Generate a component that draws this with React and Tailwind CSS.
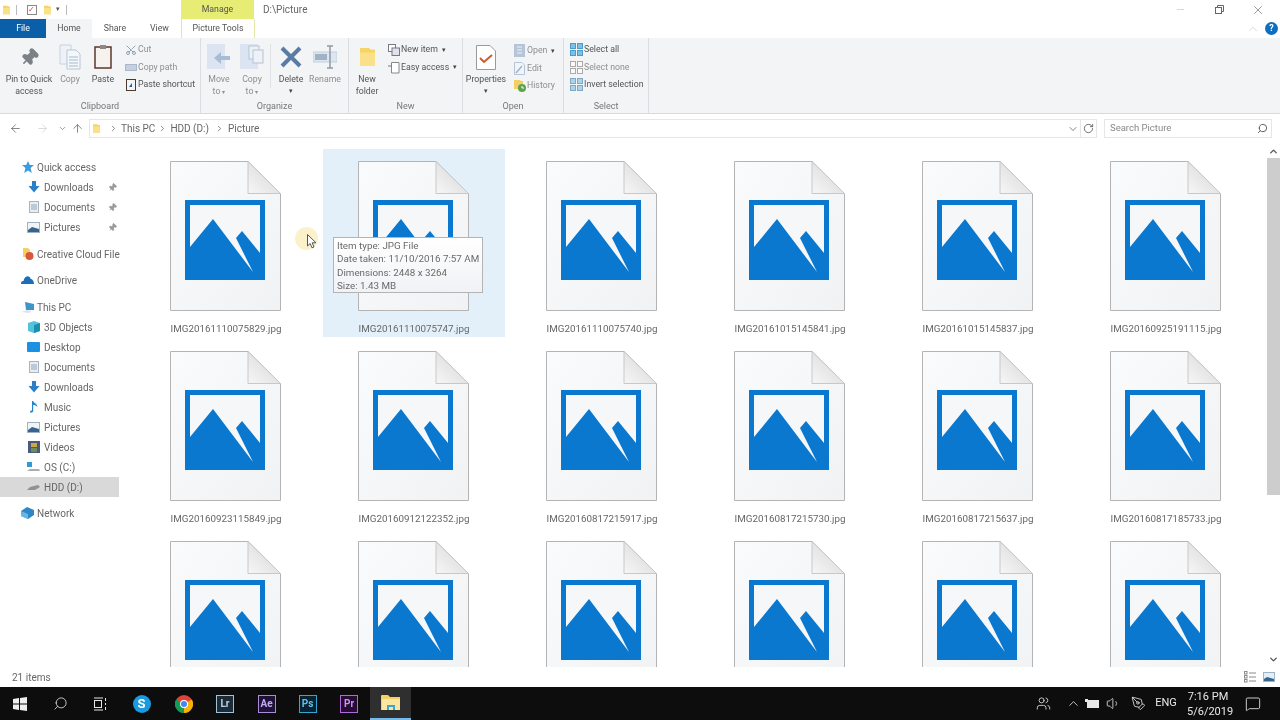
import React from 'react';
import { ArrowLeft, ArrowRight, ArrowUp, ChevronDown, ChevronUp, RotateCw, Search, Minus, X, Scissors, Pin, Volume1, Users, ChevronRight, MessageSquare, PenTool } from 'lucide-react';

const names = [
  'IMG20161110075829.jpg', 'IMG20161110075747.jpg', 'IMG20161110075740.jpg',
  'IMG20161015145841.jpg', 'IMG20161015145837.jpg', 'IMG20160925191115.jpg',
  'IMG20160923115849.jpg', 'IMG20160912122352.jpg', 'IMG20160817215917.jpg',
  'IMG20160817215730.jpg', 'IMG20160817215637.jpg', 'IMG20160817185733.jpg',
  '', '', '', '', '', '',
];

// Small yellow folder used all over the explorer chrome
function FolderIcon({ w = 10, h = 14 }) {
  return (
    <svg width={w} height={h} viewBox="0 0 10 14">
      <path d="M0 1h6l1 1h3v11H0z" fill="#f6d365" />
      <path d="M0 4h10v9H0z" fill="#fbe08a" />
    </svg>
  );
}

function DocIcon() {
  return (
    <svg width="111" height="150" viewBox="0 0 111 150" className="self-start ml-[35px] shrink-0">
      <defs>
        <linearGradient id="docfill" x1="0" y1="0" x2="1" y2="1">
          <stop offset="0" stopColor="#fafbfc" />
          <stop offset="1" stopColor="#f1f2f4" />
        </linearGradient>
        <linearGradient id="foldfill" x1="0" y1="1" x2="1" y2="0">
          <stop offset="0" stopColor="#f6f6f6" />
          <stop offset="1" stopColor="#d4d4d4" />
        </linearGradient>
      </defs>
      <path d="M0.5 0.5H78L110.500 32.500V149.500H0.500Z" fill="url(#docfill)" stroke="#b4b4b4" />
      <path d="M78 0.500V32.500H110.500Z" fill="url(#foldfill)" stroke="#c8c8c8" />
      <rect x="15" y="39" width="80" height="80" fill="#0a78cf" />
      <path d="M20 44H90V92L72 70L66 77L83 111L43 58L20 86Z" fill="#f5f7f9" />
    </svg>
  );
}

function FileCell({ name, selected }) {
  return (
    <div className={`h-[188px] flex flex-col items-center pt-3 ${selected ? 'bg-[#e3f0fa]' : ''}`}>
      <DocIcon />
      <div className="mt-[12px] text-[9.8px] leading-3 text-[#666]">{name}</div>
    </div>
  );
}

function BigBtn({ w, label, sub, arrow, disabled, children }) {
  return (
    <div className="flex flex-col items-center shrink-0" style={{ width: w }}>
      <div className="h-[28px] mt-[5px] flex items-center justify-center shrink-0">{children}</div>
      <div className={`mt-[2px] text-[8.75px] leading-3 text-center whitespace-nowrap ${disabled ? 'text-[#8f8f8f]' : 'text-[#555]'}`}>{label}</div>
      {sub && <div className={`text-[8.75px] leading-3 text-center whitespace-nowrap ${disabled ? 'text-[#8f8f8f]' : 'text-[#555]'}`}>{sub}{arrow && <span className="text-[6px] ml-[2px]">▾</span>}</div>}
      {!sub && arrow && <div className="text-[7px] leading-3 text-[#444]">▾</div>}
    </div>
  );
}

function SmallBtn({ icon, label, disabled, arrow }) {
  return (
    <div className="h-[17.5px] flex items-center">
      <div className="w-[15px] h-[15px] flex items-center justify-center shrink-0">{icon}</div>
      <span className={`text-[8.75px] whitespace-nowrap ${disabled ? 'text-[#8f8f8f]' : 'text-[#555]'}`}>{label}</span>
      {arrow && <span className="ml-1 text-[7px] text-[#444]">▾</span>}
    </div>
  );
}

function RibbonGroup({ w, label, children }) {
  return (
    <div className="flex flex-col h-full border-r border-[#dcdde0] shrink-0" style={{ width: w }}>
      <div className="flex flex-1 min-h-0">{children}</div>
      <div className="h-[13px] text-[9px] leading-3 text-center text-[#777]">{label}</div>
    </div>
  );
}

function Grid4({ fill, stroke }) {
  return (
    <svg width="13" height="13" viewBox="0 0 13 13">
      <rect x="0.5" y="0.5" width="5" height="5" fill={fill} stroke={stroke} />
      <rect x="7.5" y="0.5" width="5" height="5" fill={fill} stroke={stroke} />
      <rect x="0.5" y="7.5" width="5" height="5" fill={fill} stroke={stroke} />
      <rect x="7.5" y="7.5" width="5" height="5" fill={fill} stroke={stroke} />
    </svg>
  );
}

function Ribbon() {
  return (
    <div className="h-[76px] flex bg-[#f3f4f6] border-b border-[#d9dadc] shrink-0">
      <RibbonGroup w={201} label="Clipboard">
        <div className="w-[6px] shrink-0" />
        <BigBtn w={46} label="Pin to Quick" sub="access">
          <Pin size={19} className="text-[#7c8187] fill-[#7c8187] rotate-45" />
        </BigBtn>
        <BigBtn w={36} label="Copy" disabled>
          <svg width="22" height="26" viewBox="0 0 22 26"><path d="M1 1h11v19H1z" fill="#eef2f7" stroke="#c6d2e0" /><path d="M8 6h9l4 4v15H8z" fill="#f5f8fb" stroke="#b6c6d8" /><path d="M10 13h9M10 16h9M10 19h9M10 22h9" stroke="#a5b9d0" /></svg>
        </BigBtn>
        <BigBtn w={30} label="Paste">
          <svg width="18" height="24" viewBox="0 0 18 24"><rect x="1" y="2" width="16" height="21" fill="#f6f3ee" stroke="#5a3a28" strokeWidth="1.5" /><rect x="6" y="0" width="6" height="4" fill="#8a8a8a" /></svg>
        </BigBtn>
        <div className="ml-[5px] pt-[3px] shrink-0">
          <SmallBtn disabled label="Cut" icon={<Scissors size={12} className="text-[#8fa2b8] -rotate-90" />} />
          <SmallBtn disabled label="Copy path" icon={<div className="w-[12px] h-[7px] bg-[#c4d0e0] border border-[#aab8ca]" />} />
          <SmallBtn label="Paste shortcut" icon={<svg width="10" height="13" viewBox="0 0 10 13"><rect x="0.5" y="1.5" width="9" height="11" fill="#f4f4f4" stroke="#4a3a30" /><path d="M3 9l3-4v4z" fill="#1c5fa8" /></svg>} />
        </div>
      </RibbonGroup>
      <RibbonGroup w={148} label="Organize">
        <BigBtn w={36} label="Move" sub="to" arrow disabled>
          <svg width="24" height="26" viewBox="0 0 24 26"><rect x="0" y="0" width="18" height="25" fill="#dbe4f0" /><path d="M23 12h-9V8l-7 6 7 6v-4h9z" fill="#a8bcd3" /></svg>
        </BigBtn>
        <BigBtn w={30} label="Copy" sub="to" arrow disabled>
          <svg width="24" height="26" viewBox="0 0 24 26"><rect x="0" y="0" width="18" height="25" fill="#dbe4f0" /><rect x="9" y="2" width="10" height="13" fill="#eef2f7" stroke="#b4c3d5" /><rect x="13" y="6" width="10" height="13" fill="#eef2f7" stroke="#b4c3d5" /></svg>
        </BigBtn>
        <div className="w-[7px] flex justify-center py-[6px] shrink-0"><div className="w-px h-[44px] bg-[#e2e3e6]" /></div>
        <BigBtn w={34} label="Delete" arrow>
          <svg width="22" height="22" viewBox="0 0 22 22"><path d="M2 2L20 20M20 2L2 20" stroke="#5a7ba3" strokeWidth="4" /></svg>
        </BigBtn>
        <BigBtn w={34} label="Rename" disabled>
          <svg width="24" height="24" viewBox="0 0 24 24"><rect x="0" y="7" width="24" height="10" fill="#dde5ef" stroke="#c3cfdd" /><rect x="2" y="9" width="12" height="6" fill="#9fb2c8" /><path d="M17 1v22M14 1h6M14 23h6" stroke="#8c9aab" strokeWidth="1.5" fill="none" /></svg>
        </BigBtn>
      </RibbonGroup>
      <RibbonGroup w={114} label="New">
        <BigBtn w={36} label="New" sub="folder">
          <FolderIcon w={15} h={24} />
        </BigBtn>
        <div className="ml-[1px] pt-[3px] shrink-0">
          <SmallBtn label="New item" arrow icon={<svg width="12" height="12" viewBox="0 0 12 12"><rect x="0.5" y="0.5" width="7" height="7" fill="#fff" stroke="#778" /><rect x="4" y="4" width="7.5" height="7.5" fill="#dfe3e8" stroke="#778" /></svg>} />
          <SmallBtn label="Easy access" arrow icon={<svg width="12" height="13" viewBox="0 0 12 13"><path d="M3.5 1.5H11v10.5H3.5z" fill="#fff" stroke="#888" /><path d="M0 5h4" stroke="#777" /></svg>} />
        </div>
      </RibbonGroup>
      <RibbonGroup w={101} label="Open">
        <BigBtn w={46} label="Properties" arrow>
          <svg width="20" height="25" viewBox="0 0 20 25"><path d="M0.5 0.5H14L19.5 6V24.5H0.5Z" fill="#fff" stroke="#9a9a9a" /><path d="M4 13l4 4 8-7" fill="none" stroke="#d15a2b" strokeWidth="2" /></svg>
        </BigBtn>
        <div className="ml-[3px] pt-[4px] shrink-0">
          <SmallBtn disabled label="Open" arrow icon={<svg width="11" height="13" viewBox="0 0 11 13"><rect width="11" height="13" fill="#b5c4d6" /><path d="M3 3h5M3 6h5M3 9h5" stroke="#eef2f6" /></svg>} />
          <SmallBtn disabled label="Edit" icon={<svg width="11" height="13" viewBox="0 0 11 13"><path d="M0.5 0.5H8L10.5 3V12.5H0.5Z" fill="#f1f5f9" stroke="#b5c4d6" /><path d="M2 11L8 4" stroke="#9db4cc" strokeWidth="1.5" /></svg>} />
          <SmallBtn disabled label="History" icon={<svg width="12" height="13" viewBox="0 0 12 13"><path d="M0 1h6l1 1h2v8H0z" fill="#f3cf66" /><circle cx="8" cy="9" r="4" fill="#5aa44d" /><path d="M8 7v2h2" stroke="#fff" fill="none" /></svg>} />
        </div>
      </RibbonGroup>
      <RibbonGroup w={85} label="Select">
        <div className="ml-[5px] pt-[3px] shrink-0">
          <SmallBtn label="Select all" icon={<Grid4 fill="#7cc0e6" stroke="#4b9cc9" />} />
          <SmallBtn disabled label="Select none" icon={<Grid4 fill="#fafafa" stroke="#aaa" />} />
          <SmallBtn label="Invert selection" icon={<Grid4 fill="#a9d4ec" stroke="#7fa9c2" />} />
        </div>
      </RibbonGroup>
    </div>
  );
}

function NavRow({ indent, icon, label, pinned, active }) {
  return (
    <div className={`h-5 flex items-center w-[119px] ${active ? 'bg-[#d9d9d9]' : ''}`}>
      <div className={`${indent ? 'ml-[26px]' : 'ml-[20px]'} w-[15px] flex justify-center shrink-0`}>{icon}</div>
      <span className={`${indent ? 'ml-[3px]' : 'ml-[2px]'} text-[10px] whitespace-nowrap text-[#666]`}>{label}</span>
      {pinned && <Pin size={9} className="ml-auto mr-[2px] text-[#999] fill-[#999] rotate-45" />}
    </div>
  );
}

const DownIco = () => <svg width="12" height="12" viewBox="0 0 12 12"><path d="M4 0h4v5h3.5L6 11.5.5 5H4z" fill="#2a7fc9" /></svg>;
const DocsIco = () => <svg width="10" height="12" viewBox="0 0 10 12"><rect x="0.5" y="0.5" width="9" height="11" fill="#e9eef2" stroke="#a9b4bd" /><path d="M2 4h6M2 6h6M2 8h6" stroke="#8da7bb" /></svg>;
const PicsIco = () => <svg width="13" height="11" viewBox="0 0 13 11"><rect x="0.5" y="0.5" width="12" height="10" fill="#f0f4f7" stroke="#9fb3c3" /><path d="M1 8l4-3 7 2v3H1z" fill="#36648f" /></svg>;

function Sidebar() {
  return (
    <div className="w-[132px] shrink-0 pt-[14px]">
      <NavRow label="Quick access" icon={<svg width="12" height="12" viewBox="0 0 12 12"><path d="M6 0l1.8 4H12L8.6 7l1.2 5L6 9.4 2.2 12l1.2-5L0 4h4.2z" fill="#3b9ddd" /></svg>} />
      <NavRow indent pinned label="Downloads" icon={<DownIco />} />
      <NavRow indent pinned label="Documents" icon={<DocsIco />} />
      <NavRow indent pinned label="Pictures" icon={<PicsIco />} />
      <div className="mt-[7px]">
        <NavRow label="Creative Cloud File" icon={<svg width="12" height="12" viewBox="0 0 12 12"><path d="M1 0h5l2 2v7H1z" fill="#f3cf66" /><circle cx="7.5" cy="8" r="4" fill="#d9583b" /></svg>} />
      </div>
      <div className="mt-[6px]">
        <NavRow label="OneDrive" icon={<svg width="13" height="8" viewBox="0 0 13 8"><path d="M0 8c-.3-2 1-3 2.500-3C3 2 5-.5 7.500.5 9 1 9.500 2 9.700 3 11.500 3 13 5 13 8z" fill="#1a6fb8" /></svg>} />
      </div>
      <div className="mt-[7px]">
        <NavRow label="This PC" icon={<svg width="14" height="12" viewBox="0 0 14 12"><path d="M4 1l9 2v6H5z" fill="#3d96c9" /><path d="M0 11l6-2 5 1-3 2z" fill="#dfe3e6" /></svg>} />
      </div>
      <NavRow indent label="3D Objects" icon={<svg width="12" height="12" viewBox="0 0 12 12"><path d="M0 2l6-2 6 2v8l-6 2-6-2z" fill="#53c2dd" /><path d="M6 4l6-2v8l-6 2z" fill="#1a8fae" /></svg>} />
      <NavRow indent label="Desktop" icon={<svg width="13" height="10" viewBox="0 0 13 10"><rect width="13" height="10" rx="1" fill="#1c90e3" /></svg>} />
      <NavRow indent label="Documents" icon={<DocsIco />} />
      <NavRow indent label="Downloads" icon={<DownIco />} />
      <NavRow indent label="Music" icon={<svg width="8" height="12" viewBox="0 0 8 12"><path d="M2 0h1.200c.3 2 4.800 3 4 6C6.500 4.500 4.500 4 3.200 4v6c0 1.500-3.200 2.500-3.200 1 0-1 1-1.800 2-1.500z" fill="#2a84c9" /></svg>} />
      <NavRow indent label="Pictures" icon={<PicsIco />} />
      <NavRow indent label="Videos" icon={<svg width="12" height="12" viewBox="0 0 12 12"><rect width="12" height="12" fill="#4a5a78" /><rect x="3" y="2" width="6" height="4" fill="#c9a94a" /><rect x="3" y="7" width="6" height="4" fill="#6d8d5a" /></svg>} />
      <NavRow indent label="OS (C:)" icon={<svg width="13" height="10" viewBox="0 0 13 10"><rect x="0" y="0" width="5" height="5" fill="#2e9ad8" /><path d="M0 9l3-2h9l1 2z" fill="#a9adb1" /></svg>} />
      <NavRow indent active label="HDD (D:)" icon={<svg width="13" height="6" viewBox="0 0 13 6"><path d="M0 6l3-3 8-2 2 2-5 3z" fill="#8e9296" /></svg>} />
      <div className="mt-[6px]">
        <NavRow label="Network" icon={<svg width="13" height="12" viewBox="0 0 13 12"><path d="M6 0l7 3v5l-6 4-7-3V4z" fill="#2f88c6" /><path d="M0 4l7 3v5L0 9z" fill="#69b5e3" /></svg>} />
      </div>
    </div>
  );
}

function Scrollbar() {
  return (
    <div className="w-[13px] ml-auto shrink-0 flex flex-col items-center h-full">
      <ChevronUp size={11} strokeWidth={3} className="mt-[3px] text-[#555] shrink-0" />
      <div className="mt-[1px] w-full h-[337px] bg-[#cdcdcd]" />
      <ChevronDown size={11} strokeWidth={3} className="mt-auto mb-[2px] text-[#555] shrink-0" />
    </div>
  );
}

function Tray() {
  return (
    <div className="ml-auto flex items-center h-full text-[#e8e8e8]">
      <Users size={15} strokeWidth={1.3} />
      <ChevronUp size={15} strokeWidth={1.3} className="ml-[15px]" />
      <svg className="ml-[4px]" width="14" height="9" viewBox="0 0 14 9"><rect x="2" y="1" width="12" height="8" fill="#e8e8e8" /><rect x="0" y="0" width="3" height="3" fill="#e8e8e8" /></svg>
      <Volume1 size={15} strokeWidth={1.3} className="ml-[7px]" />
      <PenTool size={15} strokeWidth={1.3} className="ml-[10px]" />
      <span className="ml-[8px] w-[24px] text-[11px] text-center">ENG</span>
      <div className="ml-[9px] w-[42px] text-[11px] leading-[15px] text-center whitespace-nowrap">
        <div>7:16 PM</div>
        <div>5/6/2019</div>
      </div>
      <MessageSquare size={16} strokeWidth={1.3} className="ml-[16px] mr-[19px]" />
    </div>
  );
}

function AppBox({ border, text, bg, label }) {
  return (
    <div className={`w-[18px] h-[18px] border flex items-center justify-center text-[10px] font-bold leading-none ${border} ${text} ${bg}`}>{label}</div>
  );
}

function Slot({ w = 41, active, children }) {
  return (
    <div className={`h-full flex items-center justify-center shrink-0 ${active ? 'bg-[#2f2f2f] border-b-2 border-[#76b9ed]' : ''}`} style={{ width: w }}>{children}</div>
  );
}

function Taskbar() {
  return (
    <div className="h-[33px] bg-[#0d0d0e] flex items-center shrink-0">
      <div className="flex h-full">
        <Slot w={40}><svg width="14" height="14" viewBox="0 0 14 14"><path d="M0 2l6-1v5.500H0zM7 1l7-1v6.500H7zM0 7.500h6V13l-6-1zM7 7.500h7V14l-7-1z" fill="#eee" /></svg></Slot>
        <Slot w={40}><Search size={15} strokeWidth={1.3} className="text-[#e8e8e8] -scale-x-100" /></Slot>
        <Slot w={40}><svg width="14" height="14" viewBox="0 0 14 14" fill="none" stroke="#e8e8e8"><rect x="1.500" y="3.500" width="7" height="7" /><path d="M1 1h9M1 13h9M12.500 1v3M12.500 6v2M12.500 10v3" /></svg></Slot>
        <Slot w={43}><div className="w-[18px] h-[18px] rounded-full bg-[#1a9be0] text-white text-[13px] font-bold flex items-center justify-center leading-none">S</div></Slot>
        <Slot w={41}><svg width="18" height="18" viewBox="0 0 18 18"><circle cx="9" cy="9" r="9" fill="#db4437" /><path d="M9 9L1.200 13.500A9 9 0 0 0 9 18z" fill="#0f9d58" /><path d="M9 9L16.800 4.500A9 9 0 0 1 9 18z" fill="#f4b400" /><path d="M9 9L1.200 13.500A9 9 0 0 1 1.200 4.500z" fill="#0f9d58" /><circle cx="9" cy="9" r="4" fill="#fff" /><circle cx="9" cy="9" r="3" fill="#4285f4" /></svg></Slot>
        <Slot w={42}><AppBox label="Lr" border="border-[#9fc2d9]" text="text-[#b5d4e8]" bg="bg-[#1c2b36]" /></Slot>
        <Slot w={41}><AppBox label="Ae" border="border-[#a98bd8]" text="text-[#c5a8f0]" bg="bg-[#1f1238]" /></Slot>
        <Slot w={41}><AppBox label="Ps" border="border-[#35a5d5]" text="text-[#5cc2ea]" bg="bg-[#0a2230]" /></Slot>
        <Slot w={42}><AppBox label="Pr" border="border-[#b06ad8]" text="text-[#d090f0]" bg="bg-[#240c35]" /></Slot>
        <Slot w={41} active><svg width="20" height="17" viewBox="0 0 20 17"><path d="M0 2a1 1 0 0 1 1-1h6l2 2h10v13H0z" fill="#f3cf66" /><rect x="1" y="5" width="18" height="11" fill="#fbe6a0" /><path d="M6 16v-5h8v5h-2v-3H8v3z" fill="#3aa5d8" /></svg></Slot>
      </div>
      <Tray />
    </div>
  );
}

export default function App() {
  return (
    <div className="w-[1280px] h-[720px] flex flex-col overflow-hidden bg-white font-['Roboto','Noto_Sans',sans-serif] blur-[0.4px]">
      {/* title row */}
      <div className="h-[19px] flex shrink-0">
        <div className="w-[181px] flex items-center pl-[3px] shrink-0">
          <FolderIcon w={7} h={10} />
          <div className="ml-[6px] w-px h-[10px] bg-[#bbb]" />
          <div className="ml-[10px] w-[10px] h-[10px] border border-[#888] bg-white text-[#c84a3a] text-[8px] leading-[8px]">✓</div>
          <div className="ml-[7px]"><FolderIcon w={7} h={10} /></div>
          <span className="ml-[5px] text-[7px] text-[#555]">▾</span>
          <div className="ml-[6px] w-px h-[10px] bg-[#bbb]" />
        </div>
        <div className="w-[73px] bg-[#e6ec74] text-[8.75px] text-[#555] flex items-center justify-center shrink-0">Manage</div>
        <div className="ml-[9px] text-[10px] text-[#666] flex items-center">D:\Picture</div>
        <div className="ml-auto flex items-center text-[#555]">
          <Minus size={11} strokeWidth={1} className="text-[#aaa]" />
          <svg className="ml-[29px]" width="9" height="9" viewBox="0 0 9 9" fill="none" stroke="#666"><rect x="0.500" y="2.500" width="6" height="6" /><path d="M2.500 2.500v-2h6v6h-2" /></svg>
          <X size={14} strokeWidth={1} className="ml-[27px] mr-[15px]" />
        </div>
      </div>
      {/* tab row */}
      <div className="h-[19px] flex shrink-0 text-[8.75px] text-[#555]">
        <div className="w-[46px] bg-[#0b5ea8] text-white flex items-center justify-center pt-[1px]">File</div>
        <div className="w-[46px] bg-[#f3f4f6] flex items-center justify-center pt-[1px]">Home</div>
        <div className="w-[46px] flex items-center justify-center pt-[1px]">Share</div>
        <div className="w-[43px] flex items-center justify-center pt-[1px]">View</div>
        <div className="w-[74px] border-x border-[#e3e6a8] flex items-center justify-center whitespace-nowrap pt-[1px]">Picture Tools</div>
        <div className="ml-auto flex items-center">
          <ChevronUp size={14} strokeWidth={1} className="text-[#bbb]" />
          <div className="ml-[5px] mr-[2px] w-[13px] h-[13px] rounded-full bg-[#0c6fc0] text-white text-[9px] font-bold flex items-center justify-center shrink-0">?</div>
        </div>
      </div>
      <Ribbon />
      {/* address bar */}
      <div className="h-[29px] flex items-center shrink-0">
        <ArrowLeft size={13} strokeWidth={1.3} className="ml-[9px] text-[#555]" />
        <ArrowRight size={13} strokeWidth={1.3} className="ml-[14px] text-[#ccc]" />
        <ChevronDown size={9} strokeWidth={1.5} className="ml-[9px] text-[#555]" />
        <ArrowUp size={13} strokeWidth={1.3} className="ml-[4px] text-[#555]" />
        <div className="ml-[5px] w-[992px] h-[19px] border border-[#e6e6e6] flex items-center pl-[3px] text-[10px] text-[#666]">
          <FolderIcon w={7} h={11} />
          <ChevronRight size={9} className="ml-[9px]" />
          <span className="ml-[3px]">This PC</span>
          <ChevronRight size={9} className="ml-[3px]" />
          <span className="ml-[3px]">HDD (D:)</span>
          <ChevronRight size={9} className="ml-[6px]" />
          <span className="ml-[4px]">Picture</span>
          <ChevronDown size={12} strokeWidth={1.500} className="ml-auto mr-[1px] text-[#555]" />
        </div>
        <div className="w-[16px] h-[19px] border-y border-r border-[#e6e6e6] flex items-center justify-center">
          <RotateCw size={11} className="text-[#666]" />
        </div>
        <div className="ml-[7px] w-[168px] h-[19px] border border-[#e6e6e6] flex items-center pl-[5px] pr-[3px] text-[9.5px] text-[#888]">
          <span>Search Picture</span>
          <Search size={11} className="ml-auto text-[#555] -scale-x-100" />
        </div>
      </div>
      {/* main */}
      <div className="relative flex-1 min-h-0 flex overflow-hidden">
        <Sidebar />
        <div className="flex-1 min-w-0 h-full overflow-hidden pl-[3px] pt-[6px]">
          <div className="grid grid-cols-[repeat(6,182px)] gap-x-[6px] gap-y-[2px]">
            {names.map((name, i) => (
              <FileCell key={i} name={name} selected={i === 1} />
            ))}
          </div>
        </div>
        <div className="w-[13px] h-full shrink-0">
          <Scrollbar />
        </div>
        {/* hover ring + cursor */}
        <div className="absolute left-[295px] top-[84px] w-[23px] h-[23px] rounded-full bg-[#fbf2cc]" />
        <svg className="absolute left-[307px] top-[91px]" width="10" height="15" viewBox="0 0 10 15"><path d="M0.500 0.500V12L3.200 9.500L5 13.800L7 13L5.200 8.800H9Z" fill="#fff" stroke="#555" /></svg>
        {/* tooltip */}
        <div className="absolute left-[333px] top-[94px] w-[150px] h-[56px] border border-[#b4b4b4] bg-gradient-to-b from-white to-[#f1f2f6] pl-[3px] pt-[1px] text-[9.8px] leading-[13.300px] text-[#6a6a6a] whitespace-nowrap">
          <div>Item type: JPG File</div>
          <div>Date taken: 11/10/2016 7:57 AM</div>
          <div>Dimensions: 2448 x 3264</div>
          <div>Size: 1.43 MB</div>
        </div>
      </div>
      {/* status bar */}
      <div className="h-[20px] flex items-center shrink-0 text-[10px] text-[#666]">
        <span className="ml-[12px]">21 items</span>
        <div className="ml-auto flex items-center gap-[7px] mr-[5px]">
          <svg width="12" height="12" viewBox="0 0 12 12" fill="none" stroke="#8a8a8a"><rect x="0.500" y="0.500" width="2.500" height="2.500" /><rect x="0.500" y="4.500" width="2.500" height="2.500" /><rect x="0.500" y="8.500" width="2.500" height="2.500" /><path d="M5 2h7M5 6h7M5 10h7" /></svg>
          <svg width="12" height="10" viewBox="0 0 12 10"><rect x="0.500" y="0.500" width="11" height="9" fill="#e3eef5" stroke="#9bb4c6" /><path d="M1 7l3-2 7 2v2H1z" fill="#36648f" /></svg>
        </div>
      </div>
      <Taskbar />
    </div>
  );
}
